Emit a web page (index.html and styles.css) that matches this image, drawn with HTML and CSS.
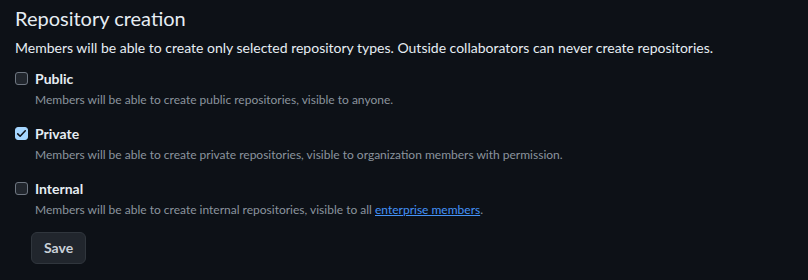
FILE: index.html
```html
<!DOCTYPE html>
<html>
<head>
<meta charset="utf-8">
<link rel="stylesheet" href="styles.css">
</head>
<body>
<div class="page">
  <h2 class="title">Repository creation</h2>
  <p class="lead">Members will be able to create only selected repository types. Outside collaborators can never create repositories.</p>
  <div class="options">
    <div class="option">
      <span class="box"></span>
      <div class="text">
        <div class="label">Public</div>
        <div class="note">Members will be able to create public repositories, visible to anyone.</div>
      </div>
    </div>
    <div class="option">
      <span class="box checked"><svg viewBox="0 0 16 16" width="11" height="11"><path d="M2.5 8.5l3.5 3.5 7.5-8" fill="none" stroke="#0d1117" stroke-width="2.2" stroke-linecap="round" stroke-linejoin="round"/></svg></span>
      <div class="text">
        <div class="label">Private</div>
        <div class="note">Members will be able to create private repositories, visible to organization members with permission.</div>
      </div>
    </div>
    <div class="option">
      <span class="box"></span>
      <div class="text">
        <div class="label">Internal</div>
        <div class="note">Members will be able to create internal repositories, visible to all <a class="link" href="#">enterprise members</a>.</div>
      </div>
    </div>
  </div>
  <button class="btn">Save</button>
</div>
</body>
</html>
```
FILE: styles.css
```css
html, body {
  margin: 0;
  background: #0d1117;
}
.page {
  padding: 3px 15px 0 15px;
  font-family: Lato, sans-serif;
  color: #e6edf3;
}
.title {
  margin: 0;
  font-size: 20px;
  font-weight: 400;
  line-height: 30px;
}
.lead {
  margin: 4px 0 0 0;
  font-size: 14px;
  line-height: 21px;
}
.options {
  margin-top: 10px;
  display: flex;
  flex-direction: column;
  gap: 14px;
}
.option {
  display: flex;
  gap: 7px;
}
.box {
  width: 13px;
  height: 13px;
  box-sizing: border-box;
  border: 1px solid #6e7681;
  border-radius: 3px;
  background: #21262d;
  margin-top: 4px;
  display: flex;
  align-items: center;
  justify-content: center;
  flex-shrink: 0;
}
.box.checked {
  background: #a5d6ff;
  border-color: #a5d6ff;
}
.label {
  font-size: 14px;
  font-weight: 700;
  line-height: 21px;
}
.note {
  margin-top: 2px;
  font-size: 12px;
  color: #8b949e;
  line-height: 18px;
}
.link {
  color: #4493f8;
  text-decoration: underline;
}
.btn {
  margin: 13px 0 0 16px;
  font-family: inherit;
  font-size: 14px;
  font-weight: 700;
  color: #c9d1d9;
  background: #21262d;
  border: 1px solid #30363d;
  border-radius: 6px;
  padding: 5px 12px;
  line-height: 20px;
}
```
